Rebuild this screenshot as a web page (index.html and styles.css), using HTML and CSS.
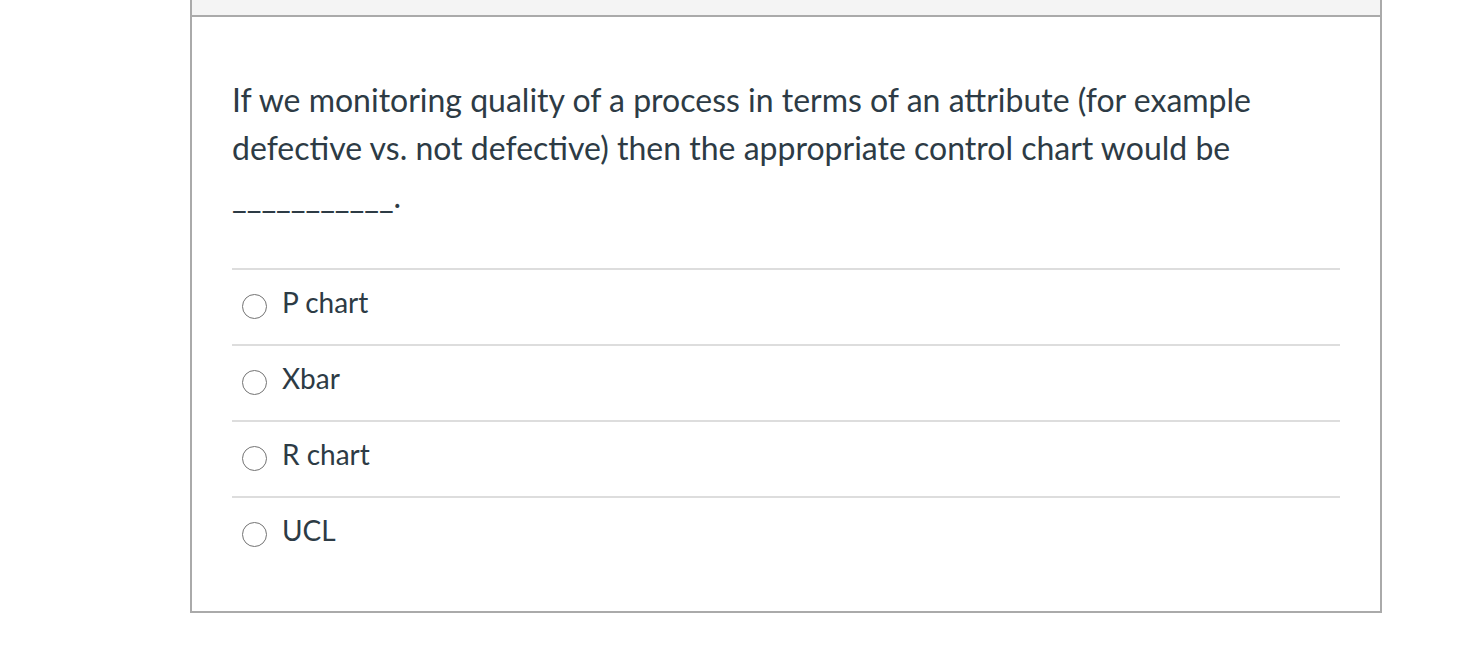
FILE: index.html
```html
<!DOCTYPE html>
<html>
<head>
<meta charset="utf-8">
<link rel="stylesheet" href="styles.css">
</head>
<body>
<div class="page">
  <div class="quiz">
    <div class="quiz-header"></div>
    <div class="quiz-body">
      <p class="question">If we monitoring quality of a process in terms of an attribute (for example defective vs. not defective) then the appropriate control chart would be ___________.</p>
      <ul class="answers">
        <li class="answer"><span class="radio"></span><span class="label">P chart</span></li>
        <li class="answer"><span class="radio"></span><span class="label">Xbar</span></li>
        <li class="answer"><span class="radio"></span><span class="label">R chart</span></li>
        <li class="answer"><span class="radio"></span><span class="label">UCL</span></li>
      </ul>
    </div>
  </div>
</div>
</body>
</html>
```
FILE: styles.css
```css
html, body {
  margin: 0;
  padding: 0;
  background: #ffffff;
}
body {
  font-family: Lato, "Open Sans", sans-serif;
  color: #2d3b45;
}
.page {
  padding-left: 190px;
  width: 1192px;
}
.quiz {
  border: 2px solid #aaaaaa;
  border-top: none;
  background: #fff;
}
.quiz-header {
  height: 15px;
  background: #f4f4f4;
  border-bottom: 2px solid #aaaaaa;
}
.quiz-body {
  padding: 59px 40px 39px 40px;
}
.question {
  margin: 0;
  font-size: 32px;
  line-height: 48px;
}
.answers {
  list-style: none;
  margin: 48px 0 0 0;
  padding: 0;
}
.answer {
  display: flex;
  align-items: center;
  height: 74px;
  border-top: 2px solid #dddddd;
  font-size: 28px;
  padding-left: 10px;
}
.radio {
  width: 23px;
  height: 23px;
  border: 1.9px solid #737373;
  border-radius: 50%;
  flex: none;
  margin-right: 15px;
  margin-top: -2px;
}
.label {
  line-height: 1;
  margin-top: -10px;
}
```
